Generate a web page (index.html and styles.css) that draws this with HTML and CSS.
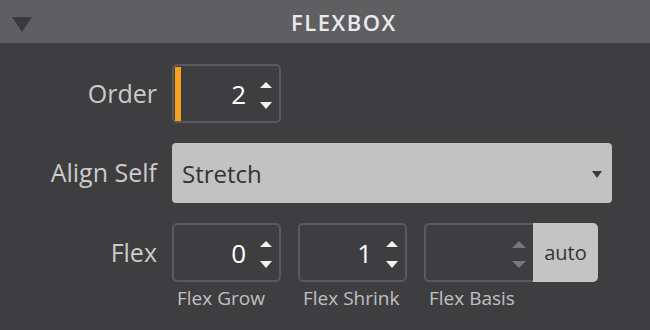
FILE: index.html
```html
<!DOCTYPE html>
<html>
<head>
<meta charset="utf-8">
<link rel="stylesheet" href="styles.css">
</head>
<body>
<div class="panel">
  <div class="header">
    <svg class="caret" width="20" height="15" viewBox="0 0 20 15"><polygon points="0,0 20,0 10,15" fill="#3a3a3c"/></svg>
    <div class="title">FLEXBOX</div>
  </div>
  <div class="body">
    <div class="label">Order</div>
    <div class="controls">
      <div class="numbox has-bar">
        <span class="bar"></span>
        <span class="num">2</span>
        <svg class="spin" width="12" height="27" viewBox="0 0 12 27"><polygon points="0,6 6,0 12,6" fill="#f2f2f2"/><polygon points="0,20 12,20 6,27" fill="#f2f2f2"/></svg>
      </div>
    </div>

    <div class="label">Align Self</div>
    <div class="controls">
      <div class="select">
        <span>Stretch</span>
        <svg width="10" height="7" viewBox="0 0 10 7"><polygon points="0,0 10,0 5,7" fill="#3a3a3a"/></svg>
      </div>
    </div>

    <div class="label">Flex</div>
    <div class="controls flexrow">
      <div class="field">
        <div class="numbox">
          <span class="num">0</span>
          <svg class="spin" width="12" height="27" viewBox="0 0 12 27"><polygon points="0,6 6,0 12,6" fill="#f2f2f2"/><polygon points="0,20 12,20 6,27" fill="#f2f2f2"/></svg>
        </div>
        <div class="sub">Flex Grow</div>
      </div>
      <div class="field">
        <div class="numbox">
          <span class="num">1</span>
          <svg class="spin" width="12" height="27" viewBox="0 0 12 27"><polygon points="0,6 6,0 12,6" fill="#f2f2f2"/><polygon points="0,20 12,20 6,27" fill="#f2f2f2"/></svg>
        </div>
        <div class="sub">Flex Shrink</div>
      </div>
      <div class="field">
        <div class="basis">
          <div class="numbox dim">
            <svg class="spin" width="14" height="27" viewBox="0 0 14 27"><polygon points="0,7 7,0 14,7" fill="#777779"/><polygon points="0,20 14,20 7,27" fill="#777779"/></svg>
          </div>
          <div class="auto">auto</div>
        </div>
        <div class="sub">Flex Basis</div>
      </div>
    </div>
  </div>
</div>
</body>
</html>
```
FILE: styles.css
```css
* { box-sizing: border-box; }
html, body { margin: 0; padding: 0; }
body {
  width: 650px;
  height: 330px;
  background: #3e3e40;
  font-family: "Open Sans", "Noto Sans", sans-serif;
  overflow: hidden;
}
.header {
  height: 43px;
  background: #5f5f61;
  display: flex;
  align-items: center;
  padding-left: 12px;
}
.caret { margin-top: 6px; }
.title {
  margin-left: 259px;
  color: #e8eaee;
  font-size: 22px;
  font-weight: 600;
  letter-spacing: 1.5px;
  line-height: 1;
  margin-top: 1px;
}
.body {
  display: grid;
  grid-template-columns: 157px 1fr;
  column-gap: 15px;
  row-gap: 20px;
  padding-top: 21px;
  align-items: start;
}
.label {
  text-align: right;
  color: #cbcbcb;
  font-size: 25px;
  line-height: 59px;
}
.controls { display: flex; }
.numbox {
  position: relative;
  width: 109px;
  height: 59px;
  border: 2px solid #5a5a5c;
  border-radius: 5px;
  display: flex;
  align-items: center;
  justify-content: flex-end;
  padding-right: 7px;
}
.bar {
  position: absolute;
  left: 1px;
  top: 1px;
  bottom: 0;
  width: 6px;
  background: #f6a01e;
}
.num {
  color: #ffffff;
  font-size: 26px;
  margin-right: 14px;
  line-height: 1;
}
.spin { margin-top: 3px; }
.select {
  width: 440px;
  height: 60px;
  background: #c2c2c2;
  border-radius: 4px;
  display: flex;
  align-items: center;
  justify-content: space-between;
  padding: 0 10px 0 10px;
  color: #333335;
  font-size: 24px;
}
.select svg { margin-top: 2px; }
.flexrow { gap: 17px; }
.field { display: flex; flex-direction: column; }
.sub {
  color: #c0c0c0;
  font-size: 19px;
  margin-top: 3px;
  padding-left: 5px;
  line-height: 26px;
}
.basis { display: flex; }
.numbox.dim {
  border-right: none;
  border-radius: 5px 0 0 5px;
  padding-right: 7px;
}
.auto {
  width: 65px;
  height: 59px;
  background: #c4c4c4;
  border-radius: 0 5px 5px 0;
  color: #333335;
  font-size: 20px;
  display: flex;
  align-items: center;
  justify-content: center;
}
```
